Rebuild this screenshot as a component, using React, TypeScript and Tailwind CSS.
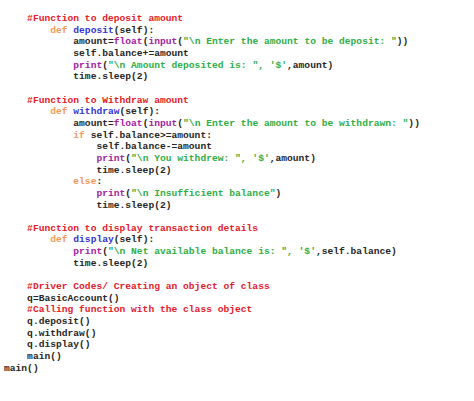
import React from 'react';

type Tok = [string, string];

// token colours
const C = 'text-[#e4202c]'; // comment
const K = 'text-[#f09a5a]'; // keyword
const F = 'text-[#3434d4]'; // def name
const B = 'text-[#a422a4]'; // builtin
const S = 'text-[#2fae45]'; // string
const T = 'text-[#262626]'; // plain

const LINES: Tok[][] = [
  [[C, '    #Function to deposit amount']],
  [[K, '        def '], [F, 'deposit'], [T, '(self):']],
  [[T, '            amount='], [B, 'float'], [T, '('], [B, 'input'], [T, '('], [S, '"\\n Enter the amount to be deposit: "'], [T, '))']],
  [[T, '            self.balance+=amount']],
  [[B, '            print'], [T, '('], [S, '"\\n Amount deposited is: ", \'$\''], [T, ',amount)']],
  [[T, '            time.sleep(2)']],
  [],
  [[C, '    #Function to Withdraw amount']],
  [[K, '        def '], [F, 'withdraw'], [T, '(self):']],
  [[T, '            amount='], [B, 'float'], [T, '('], [B, 'input'], [T, '('], [S, '"\\n Enter the amount to be withdrawn: "'], [T, '))']],
  [[K, '            if '], [T, 'self.balance>=amount:']],
  [[T, '                self.balance-=amount']],
  [[B, '                print'], [T, '('], [S, '"\\n You withdrew: ", \'$\''], [T, ',amount)']],
  [[T, '                time.sleep(2)']],
  [[K, '            else'], [T, ':']],
  [[B, '                print'], [T, '('], [S, '"\\n Insufficient balance"'], [T, ')']],
  [[T, '                time.sleep(2)']],
  [],
  [[C, '    #Function to display transaction details']],
  [[K, '        def '], [F, 'display'], [T, '(self):']],
  [[B, '            print'], [T, '('], [S, '"\\n Net available balance is: ", \'$\''], [T, ',self.balance)']],
  [[T, '            time.sleep(2)']],
  [],
  [[C, '    #Driver Codes/ Creating an object of class']],
  [[T, '    q=BasicAccount()']],
  [[C, '    #Calling function with the class object']],
  [[T, '    q.deposit()']],
  [[T, '    q.withdraw()']],
  [[T, '    q.display()']],
  [[T, '    main()']],
  [[T, 'main()']],
];

export default function App() {
  return (
    <div className="w-[474px] h-[401px] bg-white overflow-hidden pt-[13px] pl-[4px]">
      <pre className="font-['Liberation_Mono','Courier_New',monospace] font-bold text-[9.63px] leading-[11.67px] whitespace-pre">
        {LINES.map((line, i) => (
          <div key={i} className="h-[11.67px]">
            {line.map(([cls, txt], j) => (
              <span key={j} className={cls}>{txt}</span>
            ))}
          </div>
        ))}
      </pre>
    </div>
  );
}
